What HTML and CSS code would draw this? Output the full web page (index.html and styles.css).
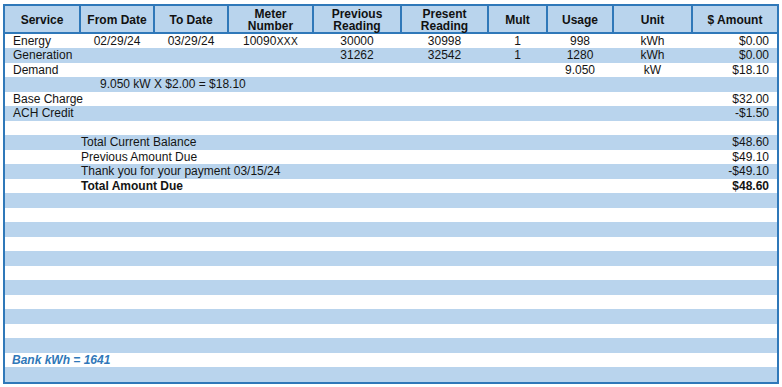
FILE: index.html
```html
<!DOCTYPE html>
<html>
<head>
<meta charset="utf-8">
<link rel="stylesheet" href="styles.css">
</head>
<body>
<div class="bill">
  <div class="head">
    <div class="hc">Service</div>
    <div class="hc">From Date</div>
    <div class="hc">To Date</div>
    <div class="hc">Meter<br>Number</div>
    <div class="hc">Previous<br>Reading</div>
    <div class="hc">Present<br>Reading</div>
    <div class="hc">Mult</div>
    <div class="hc">Usage</div>
    <div class="hc">Unit</div>
    <div class="hc last">$ Amount</div>
  </div>
  <div class="rows">
    <div class="row">
      <div class="l">Energy</div><div class="c">02/29/24</div><div class="c">03/29/24</div><div class="c">10090<span class="xx">XXX</span></div><div class="c">30000</div><div class="c">30998</div><div class="c">1</div><div class="c">998</div><div class="c">kWh</div><div class="r">$0.00</div>
    </div>
    <div class="row">
      <div class="l">Generation</div><div></div><div></div><div></div><div class="c">31262</div><div class="c">32542</div><div class="c">1</div><div class="c">1280</div><div class="c">kWh</div><div class="r">$0.00</div>
    </div>
    <div class="row">
      <div class="l">Demand</div><div></div><div></div><div></div><div></div><div></div><div></div><div class="c">9.050</div><div class="c">kW</div><div class="r">$18.10</div>
    </div>
    <div class="row">
      <div class="calc">9.050 kW X $2.00 = $18.10</div>
    </div>
    <div class="row">
      <div class="l wide">Base Charge</div><div class="r">$32.00</div>
    </div>
    <div class="row">
      <div class="l wide">ACH Credit</div><div class="r">-$1.50</div>
    </div>
    <div class="row"></div>
    <div class="row">
      <div class="tl">Total Current Balance</div><div class="r">$48.60</div>
    </div>
    <div class="row">
      <div class="tl">Previous Amount Due</div><div class="r">$49.10</div>
    </div>
    <div class="row">
      <div class="tl">Thank you for your payment 03/15/24</div><div class="r">-$49.10</div>
    </div>
    <div class="row">
      <div class="tl b">Total Amount Due</div><div class="r b">$48.60</div>
    </div>
    <div class="row"></div>
    <div class="row"></div>
    <div class="row"></div>
    <div class="row"></div>
    <div class="row"></div>
    <div class="row"></div>
    <div class="row"></div>
    <div class="row"></div>
    <div class="row"></div>
    <div class="row"></div>
    <div class="row"></div>
    <div class="row">
      <div class="bank">Bank kWh = 1641</div>
    </div>
    <div class="row"></div>
  </div>
</div>
</body>
</html>
```
FILE: styles.css
```css
html, body {
  margin: 0;
  padding: 0;
  background: #ffffff;
}
body {
  font-family: "Liberation Sans", Arial, sans-serif;
  font-size: 12px;
  color: #141414;
}
.bill {
  margin: 4px 0 0 3px;
  width: 772px;
  border: 2px solid #2f78b9;
}
.head, .row {
  display: grid;
  grid-template-columns: 76px 74px 74px 85px 88px 87px 59px 66px 79px 84px;
}
.head {
  height: 25.5px;
  background: #b9d4ed;
  border-bottom: 2px solid #2f78b9;
}
.hc {
  display: flex;
  align-items: center;
  justify-content: center;
  text-align: center;
  font-weight: bold;
  font-size: 12px;
  line-height: 12px;
  padding-top: 2px;
  border-right: 2px solid #2f78b9;
  color: #111;
}
.hc.last {
  border-right: none;
}
.row {
  height: 14.5px;
  line-height: 14px;
  white-space: nowrap;
}
.row:nth-child(even) {
  background: #b9d4ed;
}
.l {
  padding-left: 8px;
}
.c {
  text-align: center;
  padding-right: 2px;
}
.r {
  text-align: right;
  padding-right: 8px;
  grid-column: 10;
}
.wide {
  grid-column: 1 / 10;
}
.calc {
  grid-column: 2 / 10;
  padding-left: 19px;
}
.tl {
  grid-column: 2 / 10;
  padding-left: 0;
}
.b {
  font-weight: bold;
}
.xx {
  font-family: "DejaVu Sans", sans-serif;
  font-size: 10.5px;
  color: #222;
}
.bank {
  grid-column: 1 / 10;
  padding-left: 7px;
  font-weight: bold;
  font-style: italic;
  color: #2f78b9;
  font-size: 12px;
}
```
